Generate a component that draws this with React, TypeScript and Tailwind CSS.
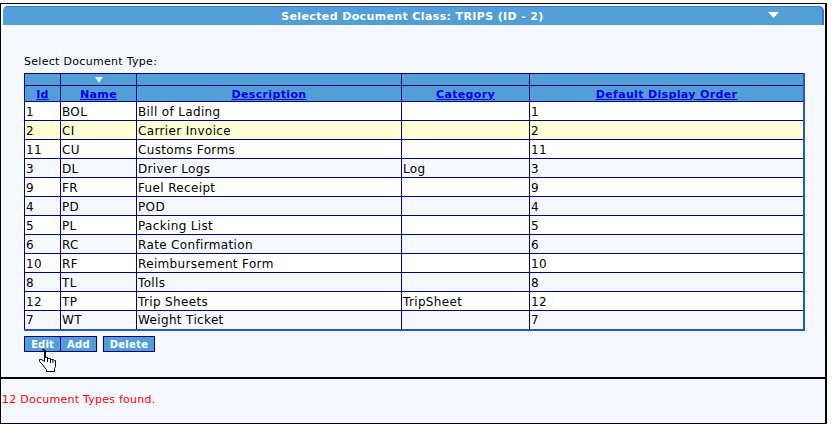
const rows = [
  ['1', 'BOL', 'Bill of Lading', '', '1'],
  ['2', 'CI', 'Carrier Invoice', '', '2'],
  ['11', 'CU', 'Customs Forms', '', '11'],
  ['3', 'DL', 'Driver Logs', 'Log', '3'],
  ['9', 'FR', 'Fuel Receipt', '', '9'],
  ['4', 'PD', 'POD', '', '4'],
  ['5', 'PL', 'Packing List', '', '5'],
  ['6', 'RC', 'Rate Confirmation', '', '6'],
  ['10', 'RF', 'Reimbursement Form', '', '10'],
  ['8', 'TL', 'Tolls', '', '8'],
  ['12', 'TP', 'Trip Sheets', 'TripSheet', '12'],
  ['7', 'WT', 'Weight Ticket', '', '7'],
];

const headers = ['Id', 'Name', 'Description', 'Category', 'Default Display Order'];

function HandCursor() {
  return (
    <svg className="absolute left-[38px] top-[349px]" width="18" height="23" viewBox="0 0 18 23">
      <path
        d="M4.500.5h2l1 1v7h2l1 1h2l1 1h2l1 1h1v6l-1 2v3h-8v-2l-2-2-2-3-3-3v-2h2l3 2V1.500z"
        fill="#fff"
        stroke="#000"
        strokeWidth="1"
      />
      <path d="M9.500 9v4M12.500 10v4M15 11v3" stroke="#000" strokeWidth="1" fill="none" />
    </svg>
  );
}

export default function App() {
  return (
    <div className="relative w-[833px] h-[429px] bg-white font-['DejaVu_Sans',sans-serif] text-[11px] leading-[13px] text-black overflow-hidden">
      <div className="w-[827px] h-[421px] mt-[3px] border-y-[1px] border-r-[2px] border-l-[1px] border-black bg-[#f5f9ff] flex flex-col">
        <div className="mt-[2px] ml-[2px] mr-[1px] h-[19px] bg-[#529fd8] rounded-t-[5px] border-t border-r-2 border-[#3f6fd0] flex items-center justify-center relative">
          <span className="font-bold text-white tracking-[0.37px] text-[11px] leading-[13px]">Selected Document Class: TRIPS (ID - 2)</span>
          <svg className="absolute right-[43px] top-[5px]" width="11" height="6" viewBox="0 0 11 6">
            <path d="M0 0h11L5.500 6z" fill="#fff" />
          </svg>
        </div>

        <div className="pl-[23px] pt-[30px] tracking-[0.3px] text-[11px] leading-[13px] h-[48px]">Select Document Type:</div>

        <div className="ml-[23px] w-[781px]">
          <table className="w-full table-fixed border-collapse border-r-2 border-l border-b-2 border-t border-[#2a55c8]">
            <colgroup>
              <col className="w-[36px]" />
              <col className="w-[76px]" />
              <col className="w-[265px]" />
              <col className="w-[128px]" />
              <col />
            </colgroup>
            <thead>
              <tr className="h-[12px] bg-[#529fd8]">
                <th className="border border-[#000080] p-0" />
                <th className="border border-[#000080] p-0 leading-[0px]">
                  <svg className="inline-block" width="8" height="6" viewBox="0 0 8 6">
                    <path d="M0 0h8L4 6z" fill="#e8eef4" />
                  </svg>
                </th>
                <th className="border border-[#000080] p-0" />
                <th className="border border-[#000080] p-0" />
                <th className="border border-[#000080] p-0" />
              </tr>
              <tr className="h-[16px] bg-[#529fd8]">
                {headers.map((h) => (
                  <th key={h} className="border border-[#000080] p-0 pt-[1px] text-center">
                    <a href="#" className="font-bold text-[#0000ee] underline tracking-[0.35px] text-[11px]">{h}</a>
                  </th>
                ))}
              </tr>
            </thead>
            <tbody>
              {rows.map((row, i) => (
                <tr key={row[0]} className={i === 1 ? 'h-[19px] bg-[#ffffd2]' : i % 2 === 0 ? 'h-[19px] bg-white' : 'h-[19px] bg-[#f5f9ff]'}>
                  {row.map((cell, j) => (
                    <td key={j} className="border border-[#000080] px-[1px] pt-[2px] pb-0 text-[12px] tracking-[0.35px]">{cell}</td>
                  ))}
                </tr>
              ))}
            </tbody>
          </table>

          <div className="flex mt-[5px]">
            <button className="w-[37px] h-[16px] pt-[1px] bg-[#529fd8] border border-[#000080] text-white font-bold text-[10px] leading-[13px] tracking-[0.1px]">Edit</button>
            <button className="w-[37px] h-[16px] pt-[1px] -ml-[1px] bg-[#529fd8] border border-[#000080] text-white font-bold text-[10px] leading-[13px] tracking-[0.3px]">Add</button>
            <button className="w-[52px] h-[16px] pt-[1px] ml-[6px] bg-[#529fd8] border border-[#000080] text-white font-bold text-[10px] leading-[13px] tracking-[0.3px]">Delete</button>
          </div>
        </div>

        <div className="mt-[25px] border-t-2 border-black pt-[14px] pl-[1px] text-[#ff0000] text-[11px] tracking-[0.25px]">12 Document Types found.</div>
      </div>
      <HandCursor />
    </div>
  );
}
